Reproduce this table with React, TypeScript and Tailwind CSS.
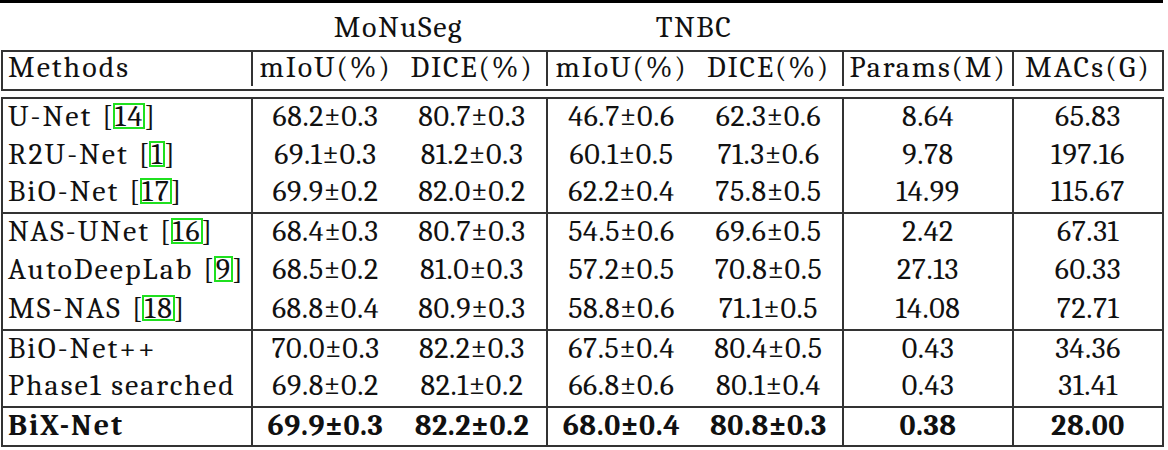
const widths = ["w-[248px]", "w-[147px]", "w-[148px]", "w-[149px]", "w-[147px]", "w-[170px]", "w-[150px]"];
// columns that open a new group get a vertical rule on their left
const ruled = [false, true, false, true, false, true, true];

type Row = { method: string; cite?: string; vals: string[]; bold?: boolean };

const groups: { h: string; rows: Row[] }[] = [
  {
    h: "h-[113px]",
    rows: [
      { method: "U-Net", cite: "14", vals: ["68.2±0.3", "80.7±0.3", "46.7±0.6", "62.3±0.6", "8.64", "65.83"] },
      { method: "R2U-Net", cite: "1", vals: ["69.1±0.3", "81.2±0.3", "60.1±0.5", "71.3±0.6", "9.78", "197.16"] },
      { method: "BiO-Net", cite: "17", vals: ["69.9±0.2", "82.0±0.2", "62.2±0.4", "75.8±0.5", "14.99", "115.67"] },
    ],
  },
  {
    h: "h-[117px]",
    rows: [
      { method: "NAS-UNet", cite: "16", vals: ["68.4±0.3", "80.7±0.3", "54.5±0.6", "69.6±0.5", "2.42", "67.31"] },
      { method: "AutoDeepLab", cite: "9", vals: ["68.5±0.2", "81.0±0.3", "57.2±0.5", "70.8±0.5", "27.13", "60.33"] },
      { method: "MS-NAS", cite: "18", vals: ["68.8±0.4", "80.9±0.3", "58.8±0.6", "71.1±0.5", "14.08", "72.71"] },
    ],
  },
  {
    h: "h-[77px]",
    rows: [
      { method: "BiO-Net++", vals: ["70.0±0.3", "82.2±0.3", "67.5±0.4", "80.4±0.5", "0.43", "34.36"] },
      { method: "Phase1 searched", vals: ["69.8±0.2", "82.1±0.2", "66.8±0.6", "80.1±0.4", "0.43", "31.41"] },
    ],
  },
  {
    h: "h-[39px]",
    rows: [{ method: "BiX-Net", bold: true, vals: ["69.9±0.3", "82.2±0.2", "68.0±0.4", "80.8±0.3", "0.38", "28.00"] }],
  },
];

function Cite({ n }: { n: string }) {
  return (
    <span className="ml-[10px]">
      [
      <span className="relative">
        {n}
        <span className="absolute left-[-2px] right-[-1px] top-[4px] bottom-[5px] border-2 border-[#1fe01f]" />
      </span>
      ]
    </span>
  );
}

function Cell({ i, children, left }: { i: number; children: React.ReactNode; left?: boolean }) {
  return (
    <div
      className={`${widths[i]} ${ruled[i] ? "border-l-2 border-[#333]" : ""} ${
        left ? "justify-start pl-[5px] tracking-[2px]" : "justify-center tracking-[0.6px]"
      } flex h-full items-center pb-[2px] whitespace-nowrap`}
    >
      {children}
    </div>
  );
}

export default function App() {
  return (
    <div className="bg-white w-[1168px] h-[450px] font-serif text-[30px] leading-none text-[#111]">
      <div className="h-[3px] w-[1163px] bg-black" />

      {/* dataset headings */}
      <div className="flex h-[47px] items-center pt-[3px] pl-[3px] tracking-[1.5px]">
        <div className="w-[248px]" />
        <div className="w-[295px] text-center">MoNuSeg</div>
        <div className="w-[296px] text-center">TNBC</div>
      </div>

      {/* column headings */}
      <div className="ml-px flex h-[41px] w-[1163px] border-2 border-[#333] pb-[3px]">
        <Cell i={0} left>Methods</Cell>
        <Cell i={1}><span className="tracking-[1.8px]">mIoU(%)</span></Cell>
        <Cell i={2}><span className="tracking-[1.8px]">DICE(%)</span></Cell>
        <Cell i={3}><span className="tracking-[1.8px]">mIoU(%)</span></Cell>
        <Cell i={4}><span className="tracking-[1.8px]">DICE(%)</span></Cell>
        <Cell i={5}><span className="tracking-[1.8px]">Params(M)</span></Cell>
        <Cell i={6}><span className="tracking-[2.2px]">MACs(G)</span></Cell>
      </div>

      {/* body */}
      <div className="ml-px mt-[6px] w-[1163px] border-2 border-[#333]">
        {groups.map((g, gi) => (
          <div key={gi} className={`${g.h} flex flex-col ${gi > 0 ? "border-t-2 border-[#333]" : ""}`}>
            {g.rows.map((r) => (
              <div key={r.method} className={`flex flex-1 ${r.bold ? "font-bold" : ""}`}>
                <Cell i={0} left>
                  {r.method}
                  {r.cite && <Cite n={r.cite} />}
                </Cell>
                {r.vals.map((v, vi) => (
                  <Cell key={vi} i={vi + 1}>{v}</Cell>
                ))}
              </div>
            ))}
          </div>
        ))}
      </div>
    </div>
  );
}
